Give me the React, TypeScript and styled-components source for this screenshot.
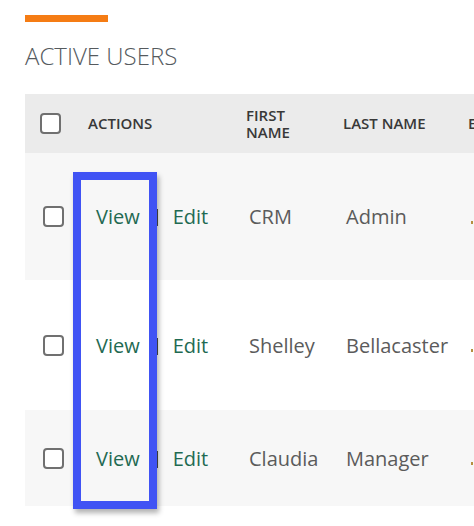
import React from "react";
import styled, { createGlobalStyle } from "styled-components";

const users = [
    { first: "CRM", last: "Admin", height: 127 },
    { first: "Shelley", last: "Bellacaster", height: 130 },
    { first: "Claudia", last: "Manager", height: 96 },
];

export default function App() {
    return (
        <Page>
            <GlobalStyle />
            <Accent />
            <Title>ACTIVE USERS</Title>
            <TableWrap>
                <HeaderRow>
                    <CheckCell $header>
                        <Checkbox />
                    </CheckCell>
                    <HeaderCell>ACTIONS</HeaderCell>
                    <HeaderCell>
                        <HeaderLabel $narrow>FIRST NAME</HeaderLabel>
                    </HeaderCell>
                    <HeaderCell>LAST NAME</HeaderCell>
                    <HeaderCell>EMAIL</HeaderCell>
                </HeaderRow>
                {users.map((u, i) => (
                    <Row key={u.first} $striped={i % 2 === 0} style={{ height: u.height }}>
                        <CheckCell>
                            <Checkbox />
                        </CheckCell>
                        <ActionsCell>
                            <ActionLink>View</ActionLink>
                            <Separator />
                            <ActionLink>Edit</ActionLink>
                        </ActionsCell>
                        <Cell>{u.first}</Cell>
                        <Cell>{u.last}</Cell>
                        <Cell>
                            <Dot />
                        </Cell>
                    </Row>
                ))}
                <Highlight />
            </TableWrap>
        </Page>
    );
}

const GlobalStyle = createGlobalStyle`
    html, body {
        margin: 0;
        padding: 0;
        background: #ffffff;
        font-family: "Open Sans", "Noto Sans", sans-serif;
        overflow: hidden;
    }
`;

const Page = styled.div`
    width: 474px;
    height: 526px;
    padding: 15px 0 0 25px;
    box-sizing: border-box;
    overflow: hidden;
`;

const Accent = styled.div`
    width: 83px;
    height: 7px;
    background: #f57c14;
`;

const Title = styled.h2`
    margin: 18px 0 0;
    font-size: 24px;
    line-height: 32px;
    font-weight: 300;
    color: #555a5e;
    letter-spacing: 0;
`;

const TableWrap = styled.div`
    position: relative;
    margin-top: 22px;
    width: 449px;
`;

const columns = "55px 158px 97px 125px 1fr";

const HeaderRow = styled.div`
    display: grid;
    grid-template-columns: ${columns};
    height: 59px;
    background: #ebebeb;
    overflow: hidden;
`;

const Row = styled.div<{ $striped: boolean }>`
    display: grid;
    grid-template-columns: ${columns};
    background: ${(p) => (p.$striped ? "#f7f7f7" : "#ffffff")};
    overflow: hidden;
`;

const HeaderCell = styled.div`
    display: flex;
    align-items: center;
    padding-left: 8px;
    font-size: 15px;
    line-height: 17px;
    font-weight: 600;
    color: #383838;
    white-space: nowrap;
`;

const HeaderLabel = styled.span<{ $narrow?: boolean }>`
    white-space: normal;
    max-width: ${(p) => (p.$narrow ? "60px" : "none")};
`;

const CheckCell = styled.div<{ $header?: boolean }>`
    display: flex;
    align-items: center;
    padding-left: ${(p) => (p.$header ? "15px" : "18px")};
`;

const Checkbox = styled.span`
    display: block;
    width: 21px;
    height: 21px;
    box-sizing: border-box;
    border: 2px solid #707070;
    border-radius: 4px;
    background: #ffffff;
`;

const Cell = styled.div`
    display: flex;
    align-items: center;
    padding-left: 11px;
    font-size: 20px;
    color: #5b5b5b;
    white-space: nowrap;
`;

const ActionsCell = styled(Cell)`
    padding-left: 16px;
`;

const ActionLink = styled.span`
    color: #1f6a52;
`;

const Separator = styled.span`
    display: block;
    width: 2px;
    height: 17px;
    margin: 2px 15px 0 16px;
    background: #4a4a4a;
`;

const Dot = styled.span`
    display: block;
    width: 2px;
    height: 3px;
    margin-top: 11px;
    background: #b5903f;
`;

const Highlight = styled.div`
    position: absolute;
    left: 48px;
    top: 78px;
    width: 84px;
    height: 337px;
    box-sizing: border-box;
    border: 8px solid #4053f4;
    box-shadow: 2px 4px 5px rgba(0, 0, 0, 0.3);
    pointer-events: none;
`;
